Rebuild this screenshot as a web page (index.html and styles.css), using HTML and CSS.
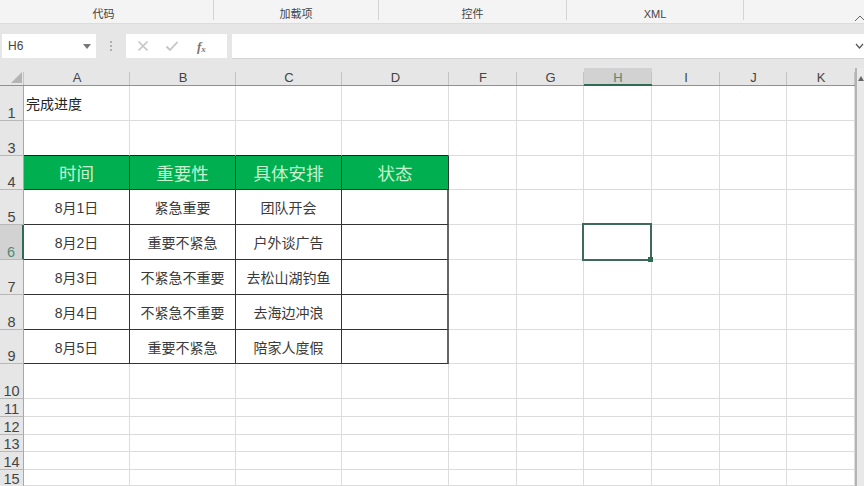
FILE: index.html
```html
<!DOCTYPE html>
<html lang="zh">
<head>
<meta charset="utf-8">
<title>完成进度</title>
<link rel="stylesheet" href="styles.css">
</head>
<body>
<div class="app">
  <div class="ribbon">
    <div class="group g1">代码</div>
    <div class="group g2">加载项</div>
    <div class="group g3">控件</div>
    <div class="group g4">XML</div>
    <div class="group g5">
      <svg class="collapse" width="10" height="8" viewBox="0 0 10 8"><path d="M1 7 L6 2 L11 7" fill="none" stroke="#666" stroke-width="1"/></svg>
    </div>
  </div>
  <div class="formula">
    <div class="namebox"><span>H6</span><svg width="8" height="5" viewBox="0 0 8 5"><path d="M0 0H8L4 5Z" fill="#777"/></svg></div>
    <div class="dots"><i></i><i></i><i></i></div>
    <div class="fxgroup">
      <svg width="12" height="12" viewBox="0 0 12 12"><path d="M1.500 1.500L10.500 10.500M10.500 1.500L1.500 10.500" stroke="#c4c4c4" stroke-width="1.600" fill="none"/></svg>
      <svg width="14" height="12" viewBox="0 0 14 12"><path d="M1.500 6.500L5 10L12.500 2" stroke="#c4c4c4" stroke-width="1.800" fill="none"/></svg>
      <span class="fx">f<sub>x</sub></span>
    </div>
    <div class="input"><svg width="9" height="6" viewBox="0 0 9 6"><path d="M1 1L4.500 5L8 1" fill="none" stroke="#555" stroke-width="1.200"/></svg></div>
  </div>
  <div class="sheet">
    <div class="grid">
      <div class="colh corner"><svg width="11" height="11" viewBox="0 0 11 11"><path d="M11 0V11H0Z" fill="#b4b4b4"/></svg></div>
      <div class="colh">A</div><div class="colh">B</div><div class="colh">C</div><div class="colh">D</div><div class="colh">F</div><div class="colh">G</div><div class="colh active-col">H</div><div class="colh">I</div><div class="colh">J</div><div class="colh">K</div>

      <div class="rowh">1</div><div class="c title">完成进度</div><div class="c"></div><div class="c"></div><div class="c"></div><div class="c"></div><div class="c"></div><div class="c"></div><div class="c"></div><div class="c"></div><div class="c"></div>

      <div class="rowh">3</div><div class="c edge-b"></div><div class="c edge-b"></div><div class="c edge-b"></div><div class="c edge-b"></div><div class="c"></div><div class="c"></div><div class="c"></div><div class="c"></div><div class="c"></div><div class="c"></div>

      <div class="rowh">4</div><div class="th">时间</div><div class="th">重要性</div><div class="th">具体安排</div><div class="th">状态</div><div class="c"></div><div class="c"></div><div class="c"></div><div class="c"></div><div class="c"></div><div class="c"></div>

      <div class="rowh">5</div><div class="td">8月1日</div><div class="td">紧急重要</div><div class="td">团队开会</div><div class="td"></div><div class="c"></div><div class="c"></div><div class="c"></div><div class="c"></div><div class="c"></div><div class="c"></div>

      <div class="rowh active-row">6</div><div class="td">8月2日</div><div class="td">重要不紧急</div><div class="td">户外谈广告</div><div class="td"></div><div class="c"></div><div class="c"></div><div class="c selected"></div><div class="c"></div><div class="c"></div><div class="c"></div>

      <div class="rowh">7</div><div class="td">8月3日</div><div class="td">不紧急不重要</div><div class="td">去松山湖钓鱼</div><div class="td"></div><div class="c"></div><div class="c"></div><div class="c"></div><div class="c"></div><div class="c"></div><div class="c"></div>

      <div class="rowh">8</div><div class="td">8月4日</div><div class="td">不紧急不重要</div><div class="td">去海边冲浪</div><div class="td"></div><div class="c"></div><div class="c"></div><div class="c"></div><div class="c"></div><div class="c"></div><div class="c"></div>

      <div class="rowh">9</div><div class="td">8月5日</div><div class="td">重要不紧急</div><div class="td">陪家人度假</div><div class="td"></div><div class="c"></div><div class="c"></div><div class="c"></div><div class="c"></div><div class="c"></div><div class="c"></div>

      <div class="rowh">10</div><div class="c"></div><div class="c"></div><div class="c"></div><div class="c"></div><div class="c"></div><div class="c"></div><div class="c"></div><div class="c"></div><div class="c"></div><div class="c"></div>

      <div class="rowh">11</div><div class="c"></div><div class="c"></div><div class="c"></div><div class="c"></div><div class="c"></div><div class="c"></div><div class="c"></div><div class="c"></div><div class="c"></div><div class="c"></div>

      <div class="rowh">12</div><div class="c"></div><div class="c"></div><div class="c"></div><div class="c"></div><div class="c"></div><div class="c"></div><div class="c"></div><div class="c"></div><div class="c"></div><div class="c"></div>

      <div class="rowh">13</div><div class="c"></div><div class="c"></div><div class="c"></div><div class="c"></div><div class="c"></div><div class="c"></div><div class="c"></div><div class="c"></div><div class="c"></div><div class="c"></div>

      <div class="rowh">14</div><div class="c"></div><div class="c"></div><div class="c"></div><div class="c"></div><div class="c"></div><div class="c"></div><div class="c"></div><div class="c"></div><div class="c"></div><div class="c"></div>

      <div class="rowh last-row">15</div><div class="c"></div><div class="c"></div><div class="c"></div><div class="c"></div><div class="c"></div><div class="c"></div><div class="c"></div><div class="c"></div><div class="c"></div><div class="c"></div>
    </div>
    <div class="scrollbar"><svg width="6" height="5" viewBox="0 0 6 5"><path d="M3 0L6 5H0Z" fill="#666"/></svg></div>
  </div>
</div>
</body>
</html>
```

FILE: styles.css
```css
* { box-sizing: border-box; }
html, body { margin: 0; padding: 0; }
body {
  width: 864px;
  height: 486px;
  overflow: hidden;
  background: #e6e6e6;
  font-family: "Liberation Sans", "Noto Sans CJK SC", sans-serif;
  color: #333;
}
.app { display: flex; flex-direction: column; height: 486px; }

/* ribbon */
.ribbon {
  display: grid;
  grid-template-columns: 214px 165px 188px 177px 1fr;
  height: 24px;
  background: #f4f4f4;
  border-bottom: 1px solid #dcdcdc;
  flex: none;
}
.group {
  border-right: 1px solid #d4d4d4;
  margin-bottom: 3px;
  font-size: 11px;
  line-height: 11px;
  padding-top: 9px;
  text-align: center;
  color: #444;
}
.g1 { padding-right: 6px; }
.g5 { border-right: 0; position: relative; }
.collapse { position: absolute; right: 0; bottom: -2px; }

/* formula bar */
.formula {
  display: flex;
  align-items: stretch;
  height: 44px;
  padding: 10px 0 10px 2px;
  background: #e6e6e6;
  flex: none;
}
.namebox {
  width: 94px;
  background: #fff;
  display: flex;
  align-items: center;
  justify-content: space-between;
  padding: 0 5px 0 6px;
  font-size: 12px;
  color: #444;
}
.dots {
  width: 30px;
  display: flex;
  flex-direction: column;
  align-items: center;
  justify-content: center;
  gap: 2px;
}
.dots i { width: 2px; height: 2px; background: #b0b0b0; }
.fxgroup {
  width: 101px;
  background: #fff;
  display: flex;
  align-items: center;
  padding-left: 11px;
  gap: 16px;
}
.fx {
  font-family: "Liberation Serif", serif;
  font-style: italic;
  font-size: 13px;
  font-weight: 700;
  color: #777;
  line-height: 1;
  margin-left: 2px;
}
.fx sub { font-size: 9px; vertical-align: -1px; line-height: 0; }
.input {
  flex: 1;
  margin-left: 5px;
  background: #fff;
  box-shadow: 0 1px 0 #d2d2d2;
  display: flex;
  align-items: center;
  justify-content: flex-end;
}

/* sheet */
.sheet { flex: 1; display: flex; min-height: 0; }
.grid {
  width: 857px;
  display: grid;
  grid-template-columns: 24px 106px 106px 106px 107px 68px 67px 68px 68px 67px 68px;
  grid-template-rows: 18px 35px 35px 34px 35px 35px 35px 35px 34px 35px 18px 18px 17px 18px 16px;
  background: #fff;
  border-right: 2px solid #b4b4b4;
}
.scrollbar {
  flex: 1;
  background: #e9e9e9;
  display: flex;
  justify-content: center;
  padding-top: 8px;
  align-items: flex-start;
}
.colh {
  background: linear-gradient(#c4c4c4, #c4c4c4) right 4px / 1px 100% no-repeat, #e6e6e6;
  border-bottom: 1px solid #8f8f8f;
  font-size: 13px;
  line-height: 20px;
  text-align: center;
  color: #444;
}
.corner {
  display: flex;
  align-items: flex-end;
  justify-content: flex-end;
  padding: 0 2px 2px 0;
}
.active-col {
  background: linear-gradient(#c4c4c4, #c4c4c4) right 4px / 1px 100% no-repeat, #d2d2d2;
  border-bottom: 2px solid #2f6b52;
  color: #4f8a74;
}
.rowh {
  background: #e6e6e6;
  border-right: 1px solid #a8a8a8;
  border-bottom: 1px solid #b8b8b8;
  font-size: 14.500px;
  line-height: 13px;
  display: flex;
  align-items: flex-end;
  justify-content: center;
  color: #444;
}
.last-row { border-bottom: 0; }
.active-row {
  background: #d2d2d2;
  border-right: 2px solid #2f6b52;
  color: #4f8a74;
}
.c {
  background: #fff;
  border-right: 1px solid #dcdcdc;
  border-bottom: 1px solid #dcdcdc;
  min-width: 0;
}
.title {
  font-size: 14px;
  line-height: 36px;
  padding-left: 2px;
  color: #222;
}
.edge-b { border-bottom-color: #222; }
.th {
  background: #00b050;
  border-right: 1px solid #263a30;
  border-bottom: 1px solid #263a30;
  color: #c6f2cf;
  font-size: 17.500px;
  display: flex;
  align-items: center;
  justify-content: center;
}
.td {
  background: #fff;
  border-right: 1px solid #333;
  border-bottom: 1px solid #333;
  font-size: 14px;
  color: #3a3a3a;
  display: flex;
  align-items: center;
  justify-content: center;
  white-space: nowrap;
}
.grid > .td:nth-child(11n + 5) { border-right: 2px solid #666; }
.selected { position: relative; }
.selected::before {
  content: "";
  box-sizing: border-box;
  position: absolute;
  left: -2px;
  top: -2px;
  width: 70px;
  height: 38px;
  border: 2px solid #3f6a5b;
}
.selected::after {
  content: "";
  position: absolute;
  left: 64px;
  top: 32px;
  width: 5px;
  height: 5px;
  background: #2f6b52;
}
```
